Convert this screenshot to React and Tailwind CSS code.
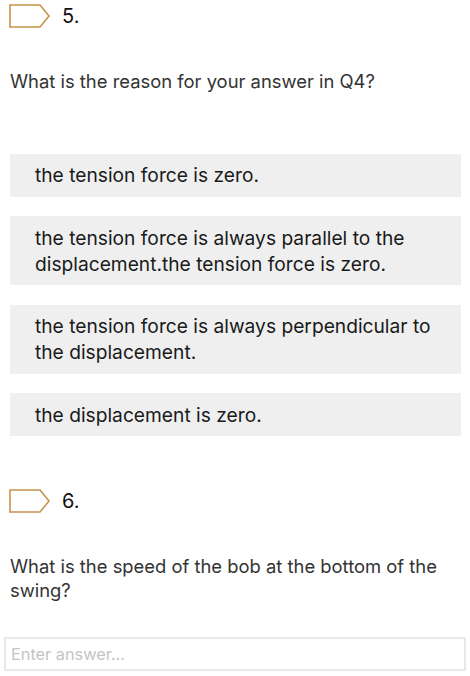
function Tag() {
  return (
    <svg width="42" height="24" viewBox="0 0 42 24" className="shrink-0">
      <path d="M1 1 H31 L40 12 L31 23 H1 Z" fill="none" stroke="#c8924c" strokeWidth="1.6" />
    </svg>
  );
}

function Question({ num, text, children }) {
  return (
    <section>
      <div className="flex items-center gap-[11px] pl-[9px] pt-[2px]">
        <Tag />
        <span className="text-[20px] leading-[28.5px] text-[#111]">{num}.</span>
      </div>
      <p className="mt-[38px] px-[10px] text-[18.4px] leading-[24px] text-[#333]">{text}</p>
      {children}
    </section>
  );
}

const options = [
  'the tension force is zero.',
  'the tension force is always parallel to the displacement.the tension force is zero.',
  'the tension force is always perpendicular to the displacement.',
  'the displacement is zero.',
];

export default function App() {
  return (
    <div className="w-[470px] h-[676px] overflow-hidden bg-white" style={{ fontFamily: 'Inter, "Noto Sans", sans-serif' }}>
      <Question num={5} text="What is the reason for your answer in Q4?">
        <div className="mt-[61px] flex flex-col gap-[19.5px] pl-[10px] pr-[9px]">
          {options.map((o) => (
            <div key={o} className="bg-[#efefef] pl-[25px] pr-[20px] py-[8.5px] text-[19.2px] leading-[26px] text-[#1a1a1a]">
              {o}
            </div>
          ))}
        </div>
      </Question>
      <div className="h-[49px]" />
      <Question num={6} text="What is the speed of the bob at the bottom of the swing?">
        <div className="mt-[35px] px-[4px]">
          <input
            placeholder="Enter answer..."
            className="w-full h-[34px] border-2 border-[#e8e8e8] px-[5px] text-[16.3px] text-[#333] placeholder:text-[#c4c4c4] outline-none"
          />
        </div>
      </Question>
    </div>
  );
}
